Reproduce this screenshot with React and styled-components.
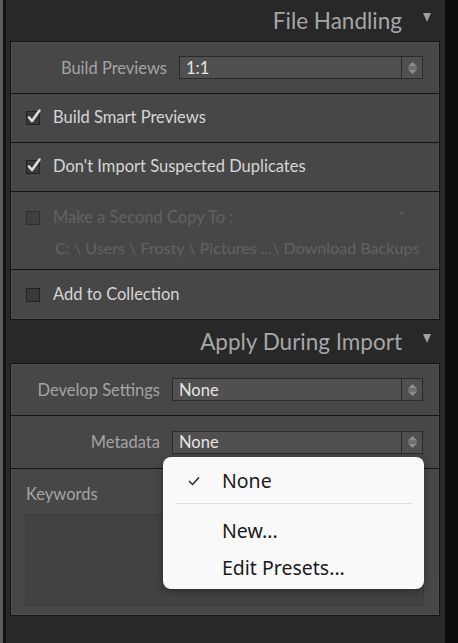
import React from "react";
import styled, { createGlobalStyle } from "styled-components";

const Global = createGlobalStyle`
  html, body {
    margin: 0;
    padding: 0;
    background: #0b0b0b;
    overflow: hidden;
  }
`;

const Page = styled.div`
  display: flex;
  height: 643px;
  font-family: Lato, "Open Sans", sans-serif;
`;

const EdgeLight = styled.div`
  width: 3px;
  background: #5a5a5a;
`;

const EdgeDark = styled.div`
  width: 3px;
  background: #121212;
`;

const Panel = styled.div`
  width: 439px;
  background: #282828;
  padding: 0 5px 0 4px;
  box-sizing: border-box;
`;

const RightEdge = styled.div`
  flex: 1;
  background: #0b0b0b;
`;

const Header = styled.div`
  height: ${({ h }) => h}px;
  display: flex;
  align-items: center;
  justify-content: flex-end;
  padding-right: 9px;
  gap: 21px;
  box-sizing: border-box;
`;

const Title = styled.div`
  font-size: 22.5px;
  color: #a6a6a6;
  margin-top: -1px;
`;

const Triangle = styled.div`
  width: 0;
  height: 0;
  border-left: 4.5px solid transparent;
  border-right: 4.5px solid transparent;
  border-top: 9px solid #a0a0a0;
  margin-top: -6px;
`;

const Box = styled.div`
  border: 1px solid #151515;
  background: #474747;
  box-shadow: inset 1px 1px 0 #4e4e4e, inset -1px -1px 0 #4e4e4e;
`;

const Row = styled.div`
  position: relative;
  height: ${({ h }) => h}px;
  border-bottom: ${({ last }) => (last ? "none" : "1px solid #151515")};
  display: flex;
  flex-direction: ${({ column }) => (column ? "column" : "row")};
  align-items: ${({ column }) => (column ? "stretch" : "center")};
  justify-content: ${({ top, column }) => (top ? "flex-start" : column ? "center" : "flex-start")};
  padding: ${({ pad }) => pad || "0"};
  box-sizing: border-box;
`;

const Label = styled.div`
  width: ${({ w }) => w}px;
  text-align: right;
  padding-right: 12px;
  box-sizing: border-box;
  font-size: 16.5px;
  color: #a4a4a4;
`;

const Select = styled.div`
  width: ${({ w }) => w}px;
  height: 23px;
  display: flex;
  align-items: stretch;
  background: #505050;
  border: 1px solid #2a2a2a;
  box-sizing: border-box;
`;

const SelectValue = styled.div`
  flex: 1;
  padding-left: 6px;
  display: flex;
  align-items: center;
  font-size: 16.5px;
  color: #e4e4e4;
`;

const Stepper = styled.div`
  width: 20px;
  border-left: 1px solid #2a2a2a;
  display: flex;
  align-items: center;
  justify-content: center;
`;

const CheckRow = styled.div`
  display: flex;
  align-items: center;
  gap: 11px;
  padding-left: 15px;
  margin-top: -2px;
  font-size: 16.5px;
  color: ${({ dim }) => (dim ? "#626262" : "#d6d6d6")};
`;

const Path = styled.div`
  padding-left: 44px;
  margin-top: 11px;
  font-size: 16.1px;
  color: #626262;
  white-space: nowrap;
`;

const SmallArrow = styled.div`
  position: absolute;
  right: 34px;
  top: 20px;
  width: 0;
  height: 0;
  border-left: 3px solid transparent;
  border-right: 3px solid transparent;
  border-top: 3px solid #5c5c5c;
`;

const KeywordsLabel = styled.div`
  font-size: 16.5px;
  color: #a4a4a4;
  padding-left: 15px;
  margin-top: -2px;
`;

const KeywordsArea = styled.div`
  margin: 10px 15px 0 14px;
  height: 90px;
  background: #424242;
  border: 1px solid #3c3c3c;
`;

const Popup = styled.div`
  position: absolute;
  left: 152px;
  top: 41px;
  width: 261px;
  height: 132px;
  background: #f9f9f9;
  border-radius: 8px;
  box-shadow: 0 2px 8px rgba(0, 0, 0, 0.35);
  padding-top: 5px;
  box-sizing: border-box;
  font-family: "Noto Sans", "Open Sans", sans-serif;
  z-index: 2;
`;

const MenuItem = styled.div`
  height: 37px;
  display: flex;
  align-items: center;
  font-size: 19.5px;
  color: #1b1b1b;
`;

const CheckSlot = styled.div`
  width: 59px;
  display: flex;
  justify-content: center;
  padding-left: 2px;
  box-sizing: border-box;
`;

const Separator = styled.div`
  height: 1px;
  background: #dcdcdc;
  margin: 4px 12px 8px 13px;
`;

const StepperIcon = () => (
  <svg width="11" height="14" viewBox="0 0 11 14">
    <path d="M5.5 1 L10 5.5 H1 Z" fill="#8e8e8e" />
    <rect x="1" y="6.5" width="9" height="1" fill="#8e8e8e" />
    <path d="M1 8.5 H10 L5.5 13 Z" fill="#8e8e8e" />
  </svg>
);

const CheckBox = ({ checked, dim }) => (
  <svg width="16" height="16" viewBox="0 0 16 16" style={{ overflow: "visible" }}>
    <rect
      x="0.5"
      y="2.5"
      width="13"
      height="13"
      fill={dim ? "#404040" : "#3a3a3a"}
      stroke={dim ? "#2e2e2e" : "#222"}
    />
    {checked && (
      <path
        d="M3 8.5 L6 12 L13.5 1.5"
        fill="none"
        stroke="#dcdcdc"
        strokeWidth="2.6"
        strokeLinecap="round"
        strokeLinejoin="round"
      />
    )}
  </svg>
);

const Tick = () => (
  <svg width="12" height="10" viewBox="0 0 12 10">
    <path d="M1 5 L4.5 8.5 L11 1.5" fill="none" stroke="#222" strokeWidth="1.4" />
  </svg>
);

const Dropdown = ({ label, value, labelWidth, width }) => (
  <>
    <Label w={labelWidth}>{label}</Label>
    <Select w={width}>
      <SelectValue>{value}</SelectValue>
      <Stepper>
        <StepperIcon />
      </Stepper>
    </Select>
  </>
);

export default function App() {
  return (
    <>
      <Global />
      <Page>
        <EdgeLight />
        <EdgeDark />
        <Panel>
          <Header h={41}>
            <Title>File Handling</Title>
            <Triangle />
          </Header>
          <Box>
            <Row h={52}>
              <Dropdown label="Build Previews" value="1:1" labelWidth={168} width={244} />
            </Row>
            <Row h={49}>
              <CheckRow>
                <CheckBox checked />
                Build Smart Previews
              </CheckRow>
            </Row>
            <Row h={49}>
              <CheckRow>
                <CheckBox checked />
                Don't Import Suspected Duplicates
              </CheckRow>
            </Row>
            <Row h={78} column pad="4px 0 0 0">
              <CheckRow dim>
                <CheckBox dim />
                Make a Second Copy To :
              </CheckRow>
              <Path>C: \ Users \ Frosty \ Pictures ...\ Download Backups</Path>
              <SmallArrow />
            </Row>
            <Row h={49} last>
              <CheckRow>
                <CheckBox />
                Add to Collection
              </CheckRow>
            </Row>
          </Box>
          <Header h={43}>
            <Title>Apply During Import</Title>
            <Triangle />
          </Header>
          <Box>
            <Row h={52}>
              <Dropdown label="Develop Settings" value="None" labelWidth={161} width={251} />
            </Row>
            <Row h={53}>
              <Dropdown label="Metadata" value="None" labelWidth={161} width={251} />
              <Popup>
                <MenuItem>
                  <CheckSlot>
                    <Tick />
                  </CheckSlot>
                  None
                </MenuItem>
                <Separator />
                <MenuItem>
                  <CheckSlot />
                  New...
                </MenuItem>
                <MenuItem>
                  <CheckSlot />
                  Edit Presets...
                </MenuItem>
              </Popup>
            </Row>
            <Row h={146} last column top pad="17px 0 0 0">
              <KeywordsLabel>Keywords</KeywordsLabel>
              <KeywordsArea />
            </Row>
          </Box>
        </Panel>
        <RightEdge />
      </Page>
    </>
  );
}
